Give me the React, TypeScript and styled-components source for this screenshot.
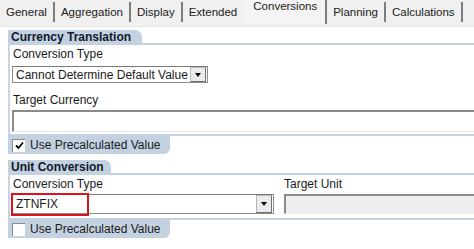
import React from 'react';
import styled, { createGlobalStyle } from 'styled-components';

const GlobalStyle = createGlobalStyle`
  html, body {
    margin: 0;
    padding: 0;
    background: #ffffff;
  }
  body {
    font-family: "Liberation Sans", Arial, sans-serif;
    font-size: 12px;
    color: #1b1b1b;
  }
`;

const Window = styled.div`
  width: 474px;
  height: 249px;
  overflow: hidden;
  background: #ffffff;
`;

const TabStrip = styled.div`
  display: flex;
  align-items: flex-end;
  height: 26px;
  background: #f0f0f0;
  border-bottom: 1px solid #e6e6e6;
  font-size: 11.5px;
`;

const Tab = styled.div<{ $active?: boolean; $noSep?: boolean }>`
  display: flex;
  align-items: center;
  height: ${(p) => (p.$active ? '24px' : '19px')};
  padding: ${(p) => (p.$active ? '0 8px 6px 10px' : '0 6px 1px 6px')};
  margin-bottom: ${(p) => (p.$active ? '2px' : '4px')};
  background: ${(p) => (p.$active ? '#f4f4f4' : 'transparent')};
  border-right: ${(p) => (p.$noSep ? 'none' : '2px solid #7d7d7d')};
  color: #1b1b1b;
  white-space: nowrap;
`;

const Panel = styled.div`
  display: flex;
  flex-direction: column;
  padding: 3px 0 0 8px;
`;

const Section = styled.div`
  display: flex;
  flex-direction: column;
  border-left: 2px solid #c9d5e3;
  margin-bottom: 6px;
`;

const HeaderRow = styled.div`
  display: flex;
  border-bottom: 2px solid #c4d1e1;
`;

const HeaderTab = styled.div<{ $width: number }>`
  width: ${(p) => p.$width}px;
  height: 13px;
  line-height: 14px;
  padding-left: 3px;
  margin-left: -2px;
  background: #c4d1e1;
  border-top-right-radius: 7px;
  font-weight: bold;
  color: #101a2c;
`;

const Label = styled.div<{ $indent?: number }>`
  height: 16px;
  line-height: 18px;
  padding-left: ${(p) => (p.$indent ?? 3)}px;
  color: #1b1b1b;
`;

const FieldRow = styled.div`
  display: flex;
  align-items: flex-start;
  gap: 10px;
  padding-left: 2px;
`;

const Column = styled.div`
  display: flex;
  flex-direction: column;
`;

const Combo = styled.div<{ $width: number; $height?: number }>`
  position: relative;
  display: flex;
  align-items: center;
  width: ${(p) => p.$width}px;
  height: ${(p) => p.$height ?? 17}px;
  box-sizing: border-box;
  border: 1px solid #8c8c8c;
  border-top-color: #7a7a7a;
  background: #ffffff;
  padding-left: 3px;
`;

const ComboText = styled.span`
  flex: 1;
  white-space: nowrap;
`;

const DropButton = styled.div<{ $height?: number }>`
  display: flex;
  align-items: center;
  justify-content: center;
  width: 14px;
  height: ${(p) => p.$height ?? 13}px;
  margin-right: 1px;
  background: #ececec;
  border: 1px solid #b8b8b8;
  border-right-color: #6f6f6f;
  border-bottom-color: #6f6f6f;

  &::after {
    content: '';
    border-left: 3px solid transparent;
    border-right: 3px solid transparent;
    border-top: 4px solid #000;
  }
`;

const TextBox = styled.div<{ $disabled?: boolean; $height: number }>`
  height: ${(p) => p.$height}px;
  box-sizing: border-box;
  background: ${(p) => (p.$disabled ? '#efefef' : '#ffffff')};
  border-top: 2px solid #8a8a8a;
  border-left: 2px solid #8a8a8a;
  border-bottom: 1px solid #e8e8e8;
  margin-left: 2px;
`;

const Highlight = styled.div`
  position: absolute;
  left: -2px;
  top: -2px;
  width: 74px;
  height: 19px;
  border: 2px solid #d9141c;
  pointer-events: none;
`;

const CheckRow = styled.div`
  display: flex;
  border-top: 2px solid #c4d1e1;
  margin-left: -2px;
`;

const CheckTab = styled.label`
  display: flex;
  align-items: center;
  gap: 5px;
  width: 158px;
  height: 18px;
  padding-left: 4px;
  background: #c4d1e1;
  border-bottom-right-radius: 6px;
  color: #1b1b1b;
`;

const Box = styled.span`
  display: flex;
  align-items: center;
  justify-content: center;
  width: 13px;
  height: 13px;
  background: #ffffff;
  border-top: 1px solid #8a8a8a;
  border-left: 1px solid #8a8a8a;
  box-sizing: border-box;
`;

const Check = () => (
  <svg width="9" height="9" viewBox="0 0 9 9">
    <path d="M1 4.5 L3.5 7 L8 1.5" fill="none" stroke="#000" strokeWidth="1.8" />
  </svg>
);

const tabs = ['General', 'Aggregation', 'Display', 'Extended', 'Conversions', 'Planning', 'Calculations'];

export default function App() {
  return (
    <Window>
      <GlobalStyle />
      <TabStrip>
        {tabs.map((t) => (
          <Tab key={t} $active={t === 'Conversions'} $noSep={t === 'Extended'}>
            {t}
          </Tab>
        ))}
      </TabStrip>
      <Panel>
        <Section>
          <HeaderRow>
            <HeaderTab $width={131}>Currency Translation</HeaderTab>
          </HeaderRow>
          <Label>Conversion Type</Label>
          <FieldRow style={{ marginTop: 5 }}>
            <Combo $width={196}>
              <ComboText>Cannot Determine Default Value</ComboText>
              <DropButton />
            </Combo>
          </FieldRow>
          <Label style={{ marginTop: 8 }}>Target Currency</Label>
          <TextBox $height={22} style={{ marginTop: 3 }} />
          <CheckRow style={{ marginTop: 2 }}>
            <CheckTab>
              <Box>
                <Check />
              </Box>
              Use Precalculated Value
            </CheckTab>
          </CheckRow>
        </Section>
        <Section>
          <HeaderRow>
            <HeaderTab $width={100}>Unit Conversion</HeaderTab>
          </HeaderRow>
          <FieldRow>
            <Column>
              <Label style={{ paddingLeft: 1 }}>Conversion Type</Label>
              <Combo $width={262} $height={20} style={{ marginTop: 3 }}>
                <Highlight />
                <ComboText>ZTNFIX</ComboText>
                <DropButton $height={16} />
              </Combo>
            </Column>
            <Column style={{ flex: 1 }}>
              <Label style={{ paddingLeft: 0 }}>Target Unit</Label>
              <TextBox $disabled $height={20} style={{ marginTop: 3, marginLeft: 0 }} />
            </Column>
          </FieldRow>
          <CheckRow style={{ marginTop: 4 }}>
            <CheckTab>
              <Box />
              Use Precalculated Value
            </CheckTab>
          </CheckRow>
        </Section>
      </Panel>
    </Window>
  );
}
